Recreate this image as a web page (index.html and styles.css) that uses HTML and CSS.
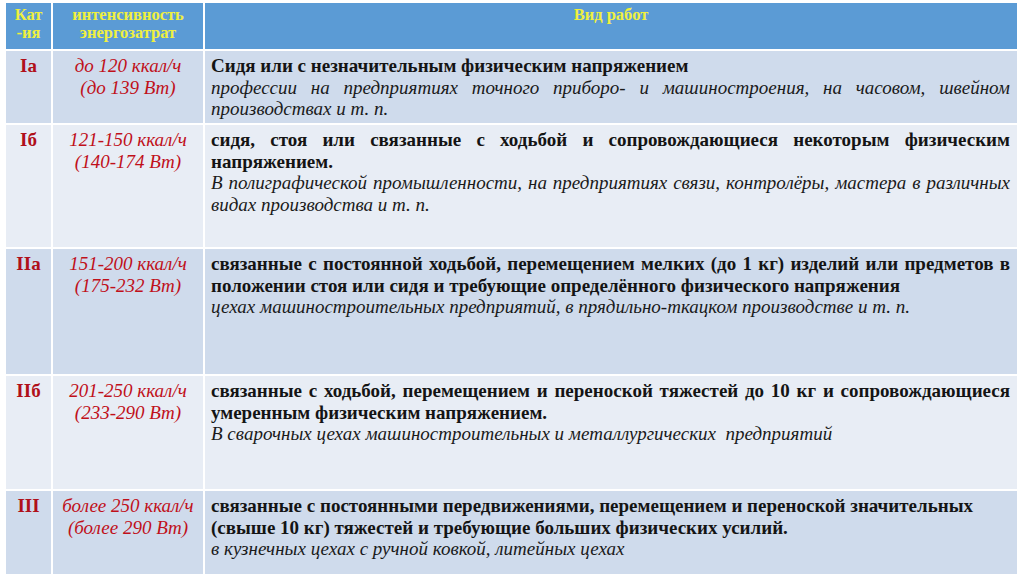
FILE: index.html
```html
<!DOCTYPE html>
<html lang="ru">
<head>
<meta charset="utf-8">
<title>Категории работ</title>
<link rel="stylesheet" href="styles.css">
</head>
<body>
<div class="table">
  <div class="cell head">Кат<br>-ия</div>
  <div class="cell head">интенсивность<br>энергозатрат</div>
  <div class="cell head">Вид работ</div>

  <div class="cell cat dark">Ia</div>
  <div class="cell energy dark">до 120 ккал/ч<br>(до 139 Вт)</div>
  <div class="cell work dark"><b>Сидя или с незначительным физическим напряжением</b><br><i>профессии на предприятиях точного приборо- и машиностроения, на часовом, швейном производствах и т. п.</i></div>

  <div class="cell cat light">Iб</div>
  <div class="cell energy light">121-150 ккал/ч<br>(140-174 Вт)</div>
  <div class="cell work light"><b>сидя, стоя или связанные с ходьбой и сопровождающиеся некоторым физическим напряжением.</b><br><i>В полиграфической промышленности, на предприятиях связи, контролёры, мастера в различных видах производства и т. п.</i></div>

  <div class="cell cat dark">IIа</div>
  <div class="cell energy dark">151-200 ккал/ч<br>(175-232 Вт)</div>
  <div class="cell work dark"><b>связанные с постоянной ходьбой, перемещением мелких (до 1 кг) изделий или предметов в положении стоя или сидя и требующие определённого физического напряжения</b><br><i>цехах машиностроительных предприятий, в прядильно-ткацком производстве и т. п.</i></div>

  <div class="cell cat light">IIб</div>
  <div class="cell energy light">201-250 ккал/ч<br>(233-290 Вт)</div>
  <div class="cell work light"><b>связанные с ходьбой, перемещением и переноской тяжестей до 10 кг и сопровождающиеся умеренным физическим напряжением.</b><br><i>В сварочных цехах машиностроительных и металлургических&nbsp; предприятий</i></div>

  <div class="cell cat dark">III</div>
  <div class="cell energy dark">более 250 ккал/ч<br>(более 290 Вт)</div>
  <div class="cell work dark left"><b>связанные с постоянными передвижениями, перемещением и переноской значительных (свыше 10 кг) тяжестей и требующие больших физических усилий.</b><br><i>в кузнечных цехах с ручной ковкой, литейных цехах</i></div>
</div>
</body>
</html>
```
FILE: styles.css
```css
html, body {
  margin: 0;
  padding: 0;
  background: #ffffff;
}
body {
  width: 1024px;
  height: 576px;
  overflow: hidden;
  font-family: "Liberation Serif", "Times New Roman", serif;
  color: #111111;
}
.table {
  display: grid;
  grid-template-columns: 45px 150px 812px;
  grid-template-rows: 46px 72px 122px 125px 113px 83px;
  gap: 2px;
  margin: 3px 0 0 6px;
  width: 1011px;
}
.cell {
  box-sizing: border-box;
}
.head {
  background: #5b9bd5;
  color: #f0f03e;
  font-weight: bold;
  font-size: 16.5px;
  line-height: 18px;
  text-align: center;
  padding-top: 3px;
}
.dark { background: #cfdbec; }
.light { background: #e8edf5; }
.cat {
  color: #b0101a;
  font-weight: bold;
  font-size: 19px;
  line-height: 21.5px;
  text-align: center;
  padding-top: 4px;
}
.energy {
  color: #c0101a;
  font-style: italic;
  font-size: 19px;
  line-height: 21.5px;
  text-align: center;
  padding-top: 4px;
}
.work {
  font-size: 19px;
  line-height: 21.5px;
  text-align: justify;
  padding: 4px 7px 0 6px;
}
.work b { color: #141414; }
.work i { color: #1a1a1a; }
.left { text-align: left; }
```
